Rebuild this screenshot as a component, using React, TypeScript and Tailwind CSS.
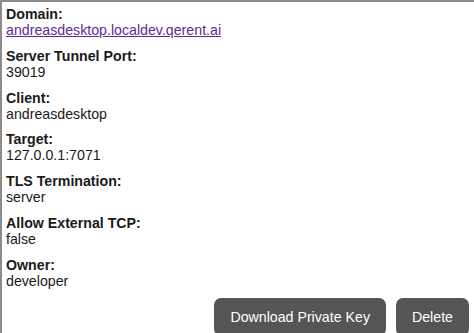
const fields: { label: string; value: string; link?: boolean }[] = [
  { label: "Domain:", value: "andreasdesktop.localdev.qerent.ai", link: true },
  { label: "Server Tunnel Port:", value: "39019" },
  { label: "Client:", value: "andreasdesktop" },
  { label: "Target:", value: "127.0.0.1:7071" },
  { label: "TLS Termination:", value: "server" },
  { label: "Allow External TCP:", value: "false" },
  { label: "Owner:", value: "developer" },
];

export default function App() {
  return (
    <div className="h-[333px] w-[474px] overflow-hidden bg-white">
      <div
        className="border-l-2 border-t-2 border-[#8c8c8c] pl-[4px] pr-[5px] pt-[4px] text-[14.2px] leading-[16.1px] text-[#1a1a1a]"
        style={{ fontFamily: '"Liberation Sans", Arial, sans-serif' }}
      >
        <div className="flex flex-col gap-[9.6px]">
          {fields.map((f) => (
            <div key={f.label}>
              <div className="font-bold">{f.label}</div>
              {f.link ? (
                <a href="#" className="text-[#5b2c92] underline">
                  {f.value}
                </a>
              ) : (
                <div>{f.value}</div>
              )}
            </div>
          ))}
        </div>
        <div className="mt-[9.5px] flex justify-end gap-[10px]">
          <button className="rounded-[7px] bg-[#555555] px-4 pb-[11px] pt-[11px] text-[14.2px] leading-[16.1px] text-white">
            Download Private Key
          </button>
          <button className="rounded-[7px] bg-[#555555] px-4 pb-[11px] pt-[11px] text-[14.2px] leading-[16.1px] text-white">
            Delete
          </button>
        </div>
      </div>
    </div>
  );
}
